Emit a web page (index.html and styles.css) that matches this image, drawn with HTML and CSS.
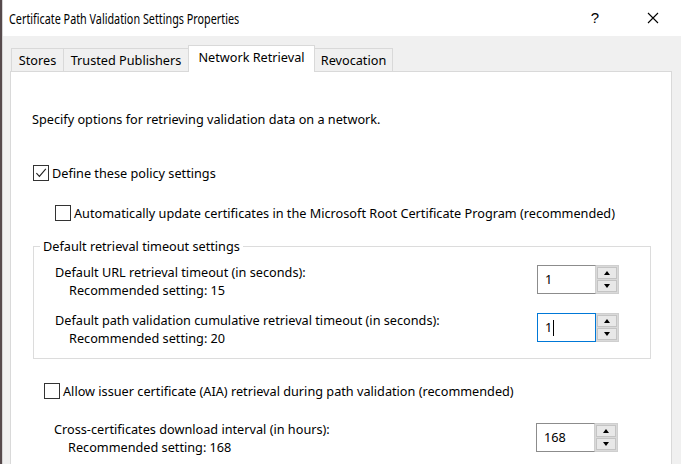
FILE: index.html
```html
<!DOCTYPE html>
<html>
<head>
<meta charset="utf-8">
<title>Certificate Path Validation Settings Properties</title>
<link rel="stylesheet" href="styles.css">
</head>
<body>
<div class="screen">
  <div class="backdrop-edge"></div>
  <div class="dialog">
    <div class="titlebar">
      <span class="title">Certificate Path Validation Settings Properties</span>
      <div class="caption-buttons">
        <span class="cap-btn help">?</span>
        <span class="cap-btn close">
          <svg width="12" height="12" viewBox="0 0 12 12"><path d="M1 1 L11 11 M11 1 L1 11" stroke="#000" stroke-width="1.1" fill="none"/></svg>
        </span>
      </div>
    </div>
    <div class="client">
      <div class="tabs">
        <div class="tab tab-stores">Stores</div>
        <div class="tab tab-trusted">Trusted Publishers</div>
        <div class="tab tab-network active">Network Retrieval</div>
        <div class="tab tab-revocation">Revocation</div>
      </div>
      <div class="panel">
        <p class="intro">Specify options for retrieving validation data on a network.</p>

        <div class="check define">
          <span class="box"><svg width="14" height="14" viewBox="0 0 14 14"><path d="M2.4 7.2 L5.4 10.4 L11.8 2.8" stroke="#222" stroke-width="1.1" fill="none"/></svg></span>
          <span>Define these policy settings</span>
        </div>

        <div class="check auto">
          <span class="box"></span>
          <span>Automatically update certificates in the Microsoft Root Certificate Program (recommended)</span>
        </div>

        <fieldset class="group">
          <legend>Default retrieval timeout settings</legend>
          <div class="group-body">
            <div class="setting-row">
              <div class="setting-text">
                <div>Default URL retrieval timeout (in seconds):</div>
                <div class="rec">Recommended setting: 15</div>
              </div>
              <div class="spin">
                <div class="spin-edit">1</div>
                <div class="spin-btns"><span class="spin-btn up"></span><span class="spin-btn down"></span></div>
              </div>
            </div>
            <div class="setting-row second">
              <div class="setting-text">
                <div>Default path validation cumulative retrieval timeout (in seconds):</div>
                <div class="rec">Recommended setting: 20</div>
              </div>
              <div class="spin focused">
                <div class="spin-edit">1<span class="caret"></span></div>
                <div class="spin-btns"><span class="spin-btn up"></span><span class="spin-btn down"></span></div>
              </div>
            </div>
          </div>
        </fieldset>

        <div class="check aia">
          <span class="box"></span>
          <span>Allow issuer certificate (AIA) retrieval during path validation (recommended)</span>
        </div>

        <div class="setting-row cross">
          <div class="setting-text">
            <div>Cross-certificates download interval (in hours):</div>
            <div class="rec">Recommended setting: 168</div>
          </div>
          <div class="spin">
            <div class="spin-edit">168</div>
            <div class="spin-btns"><span class="spin-btn up"></span><span class="spin-btn down"></span></div>
          </div>
        </div>
      </div>
    </div>
  </div>
</div>
</body>
</html>
```
FILE: styles.css
```css
html, body {
  margin: 0;
  padding: 0;
}
body {
  width: 681px;
  height: 464px;
  overflow: hidden;
  font-family: "Noto Sans", "Open Sans", sans-serif;
  font-size: 12.7px;
  line-height: 16px;
  color: #000;
  background: #f0f0f0;
}
.screen {
  display: flex;
  width: 681px;
  height: 464px;
}
.backdrop-edge {
  width: 2px;
  flex: none;
  background: #564a4c;
}
.dialog {
  flex: 1;
  display: flex;
  flex-direction: column;
  border-left: 1px solid #d4d4d4;
  min-width: 0;
}
.titlebar {
  height: 36px;
  flex: none;
  background: #fff;
  display: flex;
  align-items: center;
  justify-content: space-between;
  padding-left: 6px;
}
.title {
  font-family: "Noto Sans", "Open Sans", sans-serif;
  font-size: 13.5px;
  color: #000;
  margin-top: 1px;
  transform: scaleX(0.8);
  transform-origin: left center;
  white-space: nowrap;
}
.caption-buttons {
  display: flex;
  align-items: center;
  height: 100%;
}
.cap-btn {
  width: 46px;
  height: 36px;
  display: flex;
  align-items: center;
  justify-content: center;
}
.help {
  font-family: "Liberation Sans", sans-serif;
  font-size: 15px;
  margin-right: 12px;
}
.close {
  margin-right: 5px;
}
.client {
  flex: 1;
  display: flex;
  flex-direction: column;
  padding: 10px 9px 0 7px;
  background: #f0f0f0;
}
.tabs {
  display: flex;
  align-items: flex-end;
  height: 25px;
  padding-left: 1px;
  position: relative;
  z-index: 1;
}
.tab {
  height: 22px;
  border: 1px solid #d9d9d9;
  border-bottom: none;
  background: #f0f0f0;
  display: flex;
  align-items: center;
  justify-content: center;
  box-sizing: content-box;
  margin-left: -1px;
  white-space: nowrap;
}
.tab:first-child { margin-left: 0; }
.tab-stores { width: 51px; }
.tab-trusted { width: 124px; }
.tab-network { width: 125px; }
.tab-revocation { width: 77px; }
.tab.active {
  height: 25px;
  background: #fff;
  margin-bottom: -1px;
  padding-bottom: 1px;
  align-items: flex-start;
  line-height: 22px;
}
.panel {
  flex: 1;
  background: #fff;
  border: 1px solid #d9d9d9;
  border-bottom: none;
  padding: 39px 0 0 21px;
}
.intro {
  margin: 0;
}
.check {
  display: flex;
  align-items: center;
  gap: 3px;
  height: 16px;
  white-space: nowrap;
}
.box {
  width: 14px;
  height: 14px;
  border: 1px solid #333;
  background: #fff;
  display: flex;
  align-items: center;
  justify-content: center;
  flex: none;
}
.define {
  margin-top: 38px;
  margin-left: 1px;
}
.auto {
  margin-top: 24px;
  margin-left: 23px;
}
.group {
  margin: 17px 0 0 1px;
  width: 618px;
  padding: 0 0 13px 0;
  border: 1px solid #dcdcdc;
  box-sizing: border-box;
}
.group legend {
  margin-left: 6px;
  padding: 0 3px;
  line-height: 16px;
}
.group-body {
  padding: 11px 0 0 21px;
}
.setting-row {
  display: flex;
  justify-content: space-between;
  align-items: flex-start;
  width: 564px;
  white-space: nowrap;
}
.setting-text {
  line-height: 17.5px;
  margin-top: -1px;
  margin-bottom: -2px;
}
.setting-row.second {
  margin-top: 16px;
}
.rec {
  padding-left: 14px;
}
.spin {
  display: flex;
  width: 82px;
  height: 29px;
  box-sizing: border-box;
  border: 1px solid #cfcfcf;
  background: #fff;
}
.spin-edit {
  flex: 1;
  border: 1px solid #8c8c8c;
  border-right-color: #cfcfcf;
  margin: -1px 0 -1px -1px;
  padding-left: 7px;
  line-height: 27px;
  display: flex;
  align-items: center;
}
.spin.focused .spin-edit {
  border-color: #0078d7;
}
.caret {
  display: inline-block;
  width: 1px;
  height: 16px;
  background: #000;
  margin-left: 1px;
}
.spin-btns {
  width: 20px;
  display: flex;
  flex-direction: column;
  gap: 1px;
  padding: 1px;
  background: #d9d9d9;
}
.spin-btn {
  flex: 1;
  background: #e8e8e8;
  border: 1px solid #c4c4c4;
  position: relative;
}
.spin-btn::after {
  content: "";
  position: absolute;
  left: 50%;
  top: 50%;
  width: 0;
  height: 0;
  border-left: 3.5px solid transparent;
  border-right: 3.5px solid transparent;
  transform: translate(-50%, -50%);
}
.spin-btn.up::after {
  border-bottom: 4px solid #000;
}
.spin-btn.down::after {
  border-top: 4px solid #000;
}
.aia {
  margin-top: 24px;
  margin-left: 12px;
}
.setting-row.cross {
  margin-top: 23px;
  margin-left: 22px;
}
.setting-row.cross .spin {
  margin-top: 1px;
}
```
